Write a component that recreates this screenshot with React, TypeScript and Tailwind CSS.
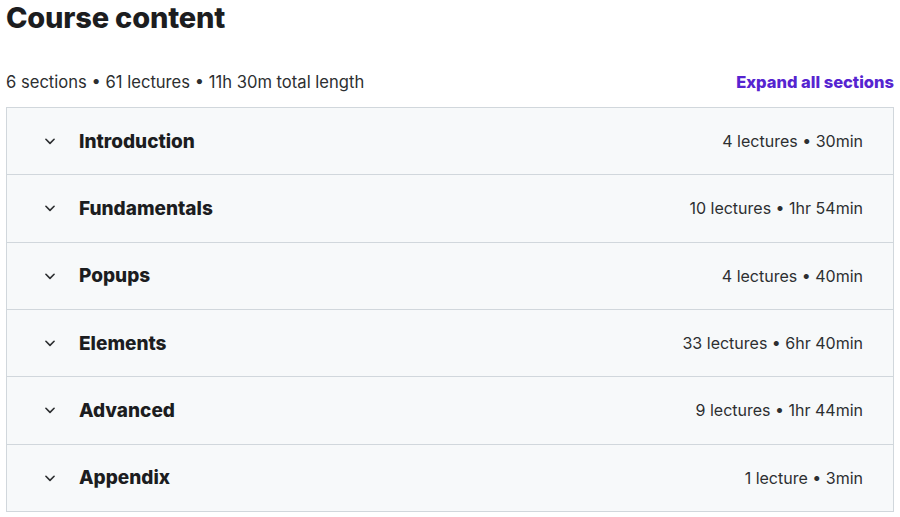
import React from "react";

const sections = [
  { title: "Introduction", meta: "4 lectures • 30min" },
  { title: "Fundamentals", meta: "10 lectures • 1hr 54min" },
  { title: "Popups", meta: "4 lectures • 40min" },
  { title: "Elements", meta: "33 lectures • 6hr 40min" },
  { title: "Advanced", meta: "9 lectures • 1hr 44min" },
  { title: "Appendix", meta: "1 lecture • 3min" },
];

function Chevron() {
  return (
    <svg width="14" height="14" viewBox="0 0 24 24" fill="none" stroke="#2d2f31" strokeWidth="2.8" strokeLinecap="round" strokeLinejoin="round">
      <path d="M5 9l7 7 7-7" />
    </svg>
  );
}

export default function App() {
  return (
    <div className="w-[900px] h-[517px] bg-white px-[6px] text-[#2d2f31]" style={{ fontFamily: "Inter, 'Noto Sans', sans-serif" }}>
      <h2 className="text-[29px] leading-[36px] font-extrabold text-[#1c1d1f] tracking-[-0.2px]">Course content</h2>
      <div className="mt-[34px] flex items-center justify-between h-[24px]">
        <span className="text-[16.6px]">6 sections • 61 lectures • 11h 30m total length</span>
        <span className="text-[16.5px] font-extrabold text-[#5624d0]">Expand all sections</span>
      </div>
      <div className="mt-[13px] h-[405px] flex flex-col border border-[#d1d7dc] divide-y divide-[#d1d7dc] bg-[#f7f9fa]">
        {sections.map((s) => (
          <div key={s.title} className="flex-1 flex items-center pl-[36px] pr-[30px]">
            <Chevron />
            <span className="ml-[22px] text-[19px] leading-[26px] pt-[1px] font-extrabold text-[#1c1d1f]">{s.title}</span>
            <span className="ml-auto text-[16px]">{s.meta}</span>
          </div>
        ))}
      </div>
    </div>
  );
}
